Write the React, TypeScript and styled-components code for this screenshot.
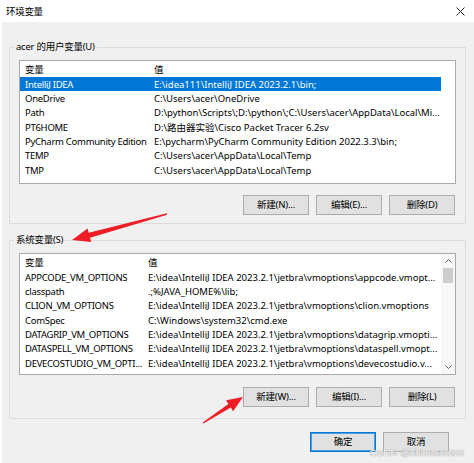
import React from "react";
import styled, { createGlobalStyle } from "styled-components";

const FONT = `"Noto Sans", "Noto Sans CJK SC", sans-serif`;

const GlobalStyle = createGlobalStyle`
  html, body { margin: 0; padding: 0; background: #ffffff; }
  body { font-family: ${FONT}; }
  * { box-sizing: border-box; }
`;

const Window = styled.div`
  position: relative;
  width: 474px;
  height: 463px;
  overflow: hidden;
  background: #ffffff;
  display: flex;
  flex-direction: column;
  font-family: ${FONT};
  font-size: 9.5px;
  color: #000;
`;

const TitleBar = styled.div`
  height: 22px;
  flex: none;
  display: flex;
  align-items: center;
  justify-content: space-between;
  padding: 1px 9px 0 6px;
  background: #ffffff;
`;

const TitleText = styled.span`
  font-size: 9.5px;
  line-height: 12px;
  letter-spacing: -0.3px;
`;

const CloseIcon = styled.svg`
  width: 9px;
  height: 9px;
  display: block;
`;

const Body = styled.div`
  flex: 1;
  margin-left: 2px;
  background: #f0f0f0;
  padding: 17px 8px 0 7px;
  display: flex;
  flex-direction: column;
`;

const GroupBox = styled.fieldset<{ $top?: number }>`
  margin: ${(p) => p.$top ?? 0}px 0 0 0;
  padding: 0;
  min-width: 0;
  border: 1px solid #dcdcdc;
`;

const GroupLegend = styled.legend`
  margin-left: 4px;
  padding: 0 2px;
  line-height: 16px;
  font-size: 9.5px;
  letter-spacing: -0.25px;
  color: #000;
`;

const GroupInner = styled.div<{ $bottom: number }>`
  padding: 5px 9px ${(p) => p.$bottom}px 9px;
  display: flex;
  flex-direction: column;
`;

const ListView = styled.div<{ $height: number }>`
  height: ${(p) => p.$height}px;
  border: 1px solid #a9a9a9;
  background: #ffffff;
  display: flex;
  overflow: hidden;
`;

const ListMain = styled.div`
  flex: 1;
  min-width: 0;
  display: flex;
  flex-direction: column;
`;

const HeaderRow = styled.div`
  height: 16px;
  flex: none;
  display: flex;
  align-items: center;
`;

const Row = styled.div<{ $selected?: boolean }>`
  height: 14.33px;
  flex: none;
  display: flex;
  align-items: center;
  background: ${(p) => (p.$selected ? "#0078d7" : "transparent")};
  color: ${(p) => (p.$selected ? "#ffffff" : "#000000")};
`;

const NameCell = styled.div<{ $width: number }>`
  width: ${(p) => p.$width}px;
  flex: none;
  padding-left: 5px;
  white-space: nowrap;
  overflow: hidden;
  letter-spacing: -0.28px;
`;

const ValueCell = styled.div`
  flex: 1;
  min-width: 0;
  white-space: nowrap;
  overflow: hidden;
`;

const Gutter = styled.div`
  width: 14px;
  flex: none;
  background: #ffffff;
`;

const ScrollBar = styled.div`
  width: 14px;
  flex: none;
  display: flex;
  flex-direction: column;
  background: #f7f7f7;
`;

const ScrollArrow = styled.div`
  height: 14px;
  flex: none;
  display: flex;
  align-items: center;
  justify-content: center;
`;

const ScrollTrack = styled.div`
  flex: 1;
  padding: 0 2px;
`;

const ScrollThumb = styled.div`
  height: 15px;
  background: #cdcdcd;
`;

const ButtonRow = styled.div<{ $top: number }>`
  margin-top: ${(p) => p.$top}px;
  display: flex;
  justify-content: flex-end;
  gap: 7px;
  padding-right: 1px;
`;

const Button = styled.button<{ $default?: boolean }>`
  width: 66px;
  height: 20px;
  padding: 0;
  background: #e1e1e1;
  border: 1px solid ${(p) => (p.$default ? "#0078d7" : "#adadad")};
  box-shadow: ${(p) => (p.$default ? "inset 0 0 0 1px #4a9ee0" : "none")};
  font-family: ${FONT};
  font-size: 9.5px;
  letter-spacing: -0.2px;
  color: #000;
  line-height: 1;
`;

const Footer = styled.div`
  margin-top: 13px;
  display: flex;
  justify-content: flex-end;
  gap: 7px;
  padding-right: 17px;
`;

const Annotation = styled.svg`
  position: absolute;
  left: 0;
  top: 0;
  width: 474px;
  height: 463px;
  pointer-events: none;
`;

const Watermark = styled.div`
  position: absolute;
  right: 10px;
  bottom: 4px;
  font-family: "Liberation Sans", Arial, sans-serif;
  font-size: 9.8px;
  line-height: 12px;
  color: #fbfbfb;
  text-shadow: 0 0 1px #8c8c8c, 0 0 1px #a0a0a0;
`;

type Item = { name: string; value: string; selected?: boolean };

const userVars: Item[] = [
  { name: "IntelliJ IDEA", value: "E:\\idea111\\IntelliJ IDEA 2023.2.1\\bin;", selected: true },
  { name: "OneDrive", value: "C:\\Users\\acer\\OneDrive" },
  { name: "Path", value: "D:\\python\\Scripts\\;D:\\python\\;C:\\Users\\acer\\AppData\\Local\\Mi..." },
  { name: "PT6HOME", value: "D:\\路由器实验\\Cisco Packet Tracer 6.2sv" },
  { name: "PyCharm Community Edition", value: "E:\\pycharm\\PyCharm Community Edition 2022.3.3\\bin;" },
  { name: "TEMP", value: "C:\\Users\\acer\\AppData\\Local\\Temp" },
  { name: "TMP", value: "C:\\Users\\acer\\AppData\\Local\\Temp" },
];

const sysVars: Item[] = [
  { name: "APPCODE_VM_OPTIONS", value: "E:\\idea\\IntelliJ IDEA 2023.2.1\\jetbra\\vmoptions\\appcode.vmopt..." },
  { name: "classpath", value: ".;%JAVA_HOME%\\lib;" },
  { name: "CLION_VM_OPTIONS", value: "E:\\idea\\IntelliJ IDEA 2023.2.1\\jetbra\\vmoptions\\clion.vmoptions" },
  { name: "ComSpec", value: "C:\\Windows\\system32\\cmd.exe" },
  { name: "DATAGRIP_VM_OPTIONS", value: "E:\\idea\\IntelliJ IDEA 2023.2.1\\jetbra\\vmoptions\\datagrip.vmopti..." },
  { name: "DATASPELL_VM_OPTIONS", value: "E:\\idea\\IntelliJ IDEA 2023.2.1\\jetbra\\vmoptions\\dataspell.vmopt..." },
  { name: "DEVECOSTUDIO_VM_OPTI...", value: "E:\\idea\\IntelliJ IDEA 2023.2.1\\jetbra\\vmoptions\\devecostudio.v..." },
  { name: "DriverData", value: "C:\\Windows\\System32\\Drivers\\DriverData" },
];

const Chevron = ({ up }: { up?: boolean }) => (
  <svg width="7" height="4" viewBox="0 0 7 4">
    <path
      d={up ? "M0.5 3.5 L3.5 0.5 L6.5 3.5" : "M0.5 0.5 L3.5 3.5 L6.5 0.5"}
      fill="none"
      stroke="#606060"
      strokeWidth="1"
    />
  </svg>
);

function VarList({
  items,
  nameWidth,
  height,
  scroll,
}: {
  items: Item[];
  nameWidth: number;
  height: number;
  scroll?: boolean;
}) {
  return (
    <ListView $height={height}>
      <ListMain>
        <HeaderRow>
          <NameCell $width={nameWidth}>变量</NameCell>
          <ValueCell>值</ValueCell>
        </HeaderRow>
        {items.map((it) => (
          <Row key={it.name} $selected={it.selected}>
            <NameCell $width={nameWidth}>{it.name}</NameCell>
            <ValueCell>{it.value}</ValueCell>
          </Row>
        ))}
      </ListMain>
      {scroll ? (
        <ScrollBar>
          <ScrollArrow>
            <Chevron up />
          </ScrollArrow>
          <ScrollTrack>
            <ScrollThumb />
          </ScrollTrack>
          <ScrollArrow>
            <Chevron />
          </ScrollArrow>
        </ScrollBar>
      ) : (
        <Gutter />
      )}
    </ListView>
  );
}

export default function App() {
  return (
    <>
      <GlobalStyle />
      <Window>
        <TitleBar>
          <TitleText>环境变量</TitleText>
          <CloseIcon viewBox="0 0 9 9">
            <path d="M0.5 0.5 L8.5 8.5 M8.5 0.5 L0.5 8.5" stroke="#2b2b2b" strokeWidth="1" fill="none" />
          </CloseIcon>
        </TitleBar>
        <Body>
          <GroupBox>
            <GroupLegend>acer 的用户变量(U)</GroupLegend>
            <GroupInner $bottom={8}>
              <VarList items={userVars} nameWidth={134} height={124} />
              <ButtonRow $top={11}>
                <Button>新建(N)...</Button>
                <Button>编辑(E)...</Button>
                <Button>删除(D)</Button>
              </ButtonRow>
            </GroupInner>
          </GroupBox>
          <GroupBox $top={8}>
            <GroupLegend>系统变量(S)</GroupLegend>
            <GroupInner $bottom={11}>
              <VarList items={sysVars} nameWidth={128} height={122} scroll />
              <ButtonRow $top={12}>
                <Button>新建(W)...</Button>
                <Button>编辑(I)...</Button>
                <Button>删除(L)</Button>
              </ButtonRow>
            </GroupInner>
          </GroupBox>
          <Footer>
            <Button $default>确定</Button>
            <Button>取消</Button>
          </Footer>
        </Body>
        <Annotation viewBox="0 0 474 463">
          <polygon
            fill="#ee1c25"
            points="72,240 87.5,228.5 88.7,232.8 166.9,213.3 167.1,214.7 90.0,237.7 91.2,242.0"
          />
          <polygon
            fill="#ee1c25"
            points="243,397 226.1,400.2 228.4,403.9 202.7,422.6 203.3,423.4 230.8,407.5 233.1,411.2"
          />
        </Annotation>
        <Watermark>CSDN @shimmer008</Watermark>
      </Window>
    </>
  );
}
